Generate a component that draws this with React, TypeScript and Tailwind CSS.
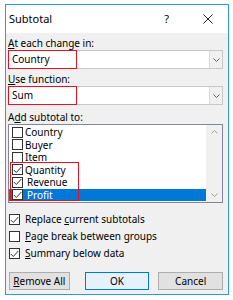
import React from "react";

const font = "font-['Segoe_UI','Noto_Sans','Open_Sans',sans-serif]";

function Chevron() {
  return (
    <svg width="7" height="4" viewBox="0 0 7 4" fill="none">
      <path d="M0.5 0.5 L3.5 3.5 L6.5 0.5" stroke="#606060" strokeWidth="1" />
    </svg>
  );
}

function Check({ checked }: { checked: boolean }) {
  return (
    <span className="flex h-[11px] w-[11px] shrink-0 items-center justify-center border border-[#333333] bg-white">
      {checked ? (
        <svg width="9" height="8" viewBox="0 0 9 8" fill="none">
          <path d="M0.8 4 L3.3 6.5 L8.3 1" stroke="#333333" strokeWidth="1" />
        </svg>
      ) : null}
    </span>
  );
}

function Combo({ value }: { value: string }) {
  return (
    <div className="relative flex h-[19px] items-stretch border border-[#c8c8c8] bg-white">
      <div className="flex-1 pl-[3px] text-[10px] leading-[17px] text-black">{value}</div>
      <div className="flex w-[13px] items-center justify-center border-l border-[#dadada] bg-[#f0f0f0]">
        <Chevron />
      </div>
      <div className="absolute -left-[1px] -top-[1px] h-[19px] w-[69px] border-[1.5px] border-[#e81123]" />
    </div>
  );
}

const items = [
  { label: "Country", checked: false, pad: "" },
  { label: "Buyer", checked: false, pad: "" },
  { label: "Item", checked: false, pad: "" },
  { label: "Quantity", checked: true, pad: "" },
  { label: "Revenue", checked: true, pad: "pl-[2px]" },
  { label: "Profit", checked: true, pad: "pl-[2px]" },
];

export default function App() {
  return (
    <div className={`h-[300px] w-[233px] bg-white pb-[5px] pl-[5px] pr-[4px] pt-[4px] ${font}`}>
      <div className="flex h-full flex-col border border-[#2b9ae6]">
        <div className="flex h-[28px] items-center bg-white pl-[3px] text-[11px] text-black">
          <span className="flex-1">Subtotal</span>
          <span className="mr-[34px] text-[11px]">?</span>
          <svg width="10" height="10" viewBox="0 0 10 10" className="mr-[15px]">
            <path d="M0.5 0.5 L9.5 9.5 M9.5 0.5 L0.5 9.5" stroke="#222" strokeWidth="1" />
          </svg>
        </div>
        <div className="flex flex-1 flex-col bg-[#f0f0f0] pl-[2px] pr-[5px] text-[10px] text-black">
          <div className="mt-[3px] h-[14px] leading-[14px]">
            <u>A</u>t each change in:
          </div>
          <Combo value="Country" />
          <div className="mt-[3px] h-[14px] leading-[14px]">
            <u>U</u>se function:
          </div>
          <Combo value="Sum" />
          <div className="mt-[5px] h-[14px] leading-[14px]">
            A<u>d</u>d subtotal to:
          </div>
          <div className="relative flex h-[79px] border border-[#828790] bg-white">
            <div className="flex-1 pt-[1px]">
              {items.map((it) => (
                <div
                  key={it.label}
                  className={`flex h-[12.5px] items-center pl-[3px] ${it.label === "Profit" ? "bg-[#0078d7]" : ""}`}
                >
                  <Check checked={it.checked} />
                  <span
                    className={`ml-[2px] leading-[12px] ${it.pad} ${it.label === "Profit" ? "text-white" : "text-black"}`}
                  >
                    {it.label}
                  </span>
                </div>
              ))}
            </div>
            <div className="flex w-[16px] flex-col items-center justify-between bg-[#f0f0f0] py-[5px]">
              <svg width="7" height="4" viewBox="0 0 7 4" fill="none">
                <path d="M0.5 3.5 L3.5 0.5 L6.5 3.5" stroke="#a0a0a0" strokeWidth="1" />
              </svg>
              <svg width="7" height="4" viewBox="0 0 7 4" fill="none">
                <path d="M0.5 0.5 L3.5 3.5 L6.5 0.5" stroke="#a0a0a0" strokeWidth="1" />
              </svg>
            </div>
            <div className="absolute left-[1px] top-[37px] h-[39px] w-[69px] border-[1.5px] border-[#e81123]" />
          </div>
          <div className="mt-[8px] flex h-[17px] items-center gap-[5px] pl-[1px]">
            <Check checked />
            <span>
              Replace <u>c</u>urrent subtotals
            </span>
          </div>
          <div className="flex h-[17px] items-center gap-[5px] pl-[1px]">
            <Check checked={false} />
            <span>
              <u>P</u>age break between groups
            </span>
          </div>
          <div className="flex h-[17px] items-center gap-[5px] pl-[1px]">
            <Check checked />
            <span>
              <u>S</u>ummary below data
            </span>
          </div>
          <div className="mt-[10px] flex h-[18px] items-stretch">
            <button className="ml-[1px] w-[61px] border border-[#adadad] bg-[#e1e1e1] text-[10px]">
              <u>R</u>emove All
            </button>
            <button className="ml-[15px] w-[65px] border border-[#0078d7] bg-[#e5f1fb] text-[10px]">
              OK
            </button>
            <button className="ml-[9px] w-[65px] border border-[#adadad] bg-[#e1e1e1] text-[10px]">
              Cancel
            </button>
          </div>
        </div>
      </div>
    </div>
  );
}
